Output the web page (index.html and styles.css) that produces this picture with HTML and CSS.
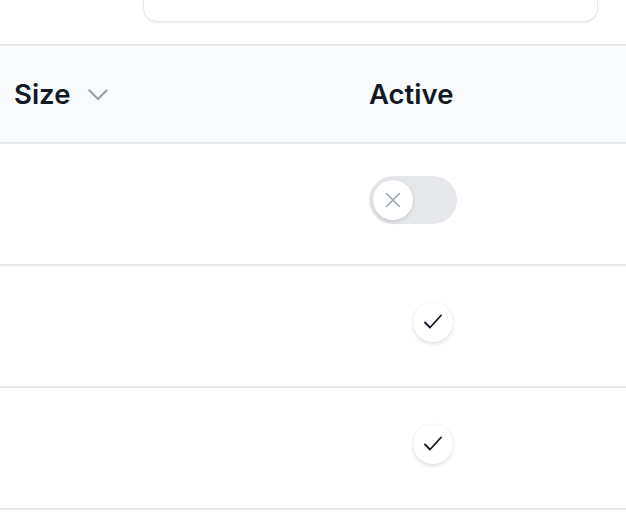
FILE: index.html
```html
<!DOCTYPE html>
<html lang="en">
<head>
    <meta charset="UTF-8">
    <meta name="viewport" content="width=device-width, initial-scale=1.0">
    <title>Products</title>
    <link rel="stylesheet" href="styles.css">
</head>
<body>
<div class="toolbar">
    <div class="search-card"></div>
</div>

<div class="grid-table">
    <div class="row head">
        <div class="cell">
            <span>Size</span>
            <svg class="sort" width="20" height="12" viewBox="0 0 20 12">
                <path d="M1.5 1.5 L10 10 L18.5 1.5" fill="none" stroke="#9ca3af" stroke-width="2.4" stroke-linecap="round" stroke-linejoin="round"/>
            </svg>
        </div>
        <div class="cell">Active</div>
    </div>

    <div class="row">
        <div class="cell"></div>
        <div class="cell">
            <button class="toggle" aria-label="Inactive">
                <span class="knob">
                    <svg width="16" height="16" viewBox="0 0 16 16">
                        <path d="M1.5 1.5 L14.5 14.5 M14.5 1.5 L1.5 14.5" stroke="#9ca3af" stroke-width="1.6" stroke-linecap="round"/>
                    </svg>
                </span>
            </button>
        </div>
    </div>

    <div class="row">
        <div class="cell"></div>
        <div class="cell">
            <button class="toggle on" aria-label="Active">
                <span class="knob">
                    <svg width="18" height="16" viewBox="0 0 18 16">
                        <path d="M1 8.5 L6 13.5 L17 1.5" fill="none" stroke="#111827" stroke-width="1.8" stroke-linecap="round" stroke-linejoin="round"/>
                    </svg>
                </span>
            </button>
        </div>
    </div>

    <div class="row">
        <div class="cell"></div>
        <div class="cell">
            <button class="toggle on" aria-label="Active">
                <span class="knob">
                    <svg width="18" height="16" viewBox="0 0 18 16">
                        <path d="M1 8.5 L6 13.5 L17 1.5" fill="none" stroke="#111827" stroke-width="1.8" stroke-linecap="round" stroke-linejoin="round"/>
                    </svg>
                </span>
            </button>
        </div>
    </div>
</div>
</body>
</html>
```

FILE: styles.css
```css
body {
    font-family: "Inter", "Liberation Sans", sans-serif;
    background-color: #ffffff;
    color: #111827;
    margin: 0;
    padding: 0;
}

.toolbar {
    display: flow-root;
    height: 44px;
    padding: 0 28px 0 143px;
    box-sizing: border-box;
}

.search-card {
    height: 40px;
    margin-top: -20px;
    background-color: #ffffff;
    border: 1px solid #e5e7eb;
    border-radius: 14px;
    box-shadow: 0 1px 2px rgba(0, 0, 0, 0.08);
}

.grid-table {
    border-top: 2px solid #e5e7eb;
}

.row {
    display: grid;
    grid-template-columns: 355px 1fr;
    height: 122px;
    box-sizing: border-box;
    border-bottom: 2px solid #e5e7eb;
}

.row.head {
    height: 98px;
    background-color: #f9fafb;
    font-size: 27.5px;
    font-weight: 600;
}

.cell {
    padding: 0 14px;
    display: flex;
    align-items: center;
}

.row:not(.head) .cell {
    align-items: flex-start;
    padding-top: 32px;
}

.sort {
    margin-left: 18px;
    margin-top: 2px;
}

.toggle {
    width: 88px;
    height: 48px;
    padding: 4px;
    border: none;
    border-radius: 24px;
    background-color: #e5e7eb;
    cursor: pointer;
    display: flex;
    align-items: center;
}

.toggle.on {
    background-color: transparent;
    justify-content: flex-end;
}

.knob {
    width: 40px;
    height: 40px;
    border-radius: 50%;
    background-color: #ffffff;
    box-shadow: 0 2px 4px rgba(0, 0, 0, 0.12), 0 0 1px rgba(0, 0, 0, 0.08);
    display: flex;
    align-items: center;
    justify-content: center;
}
```
